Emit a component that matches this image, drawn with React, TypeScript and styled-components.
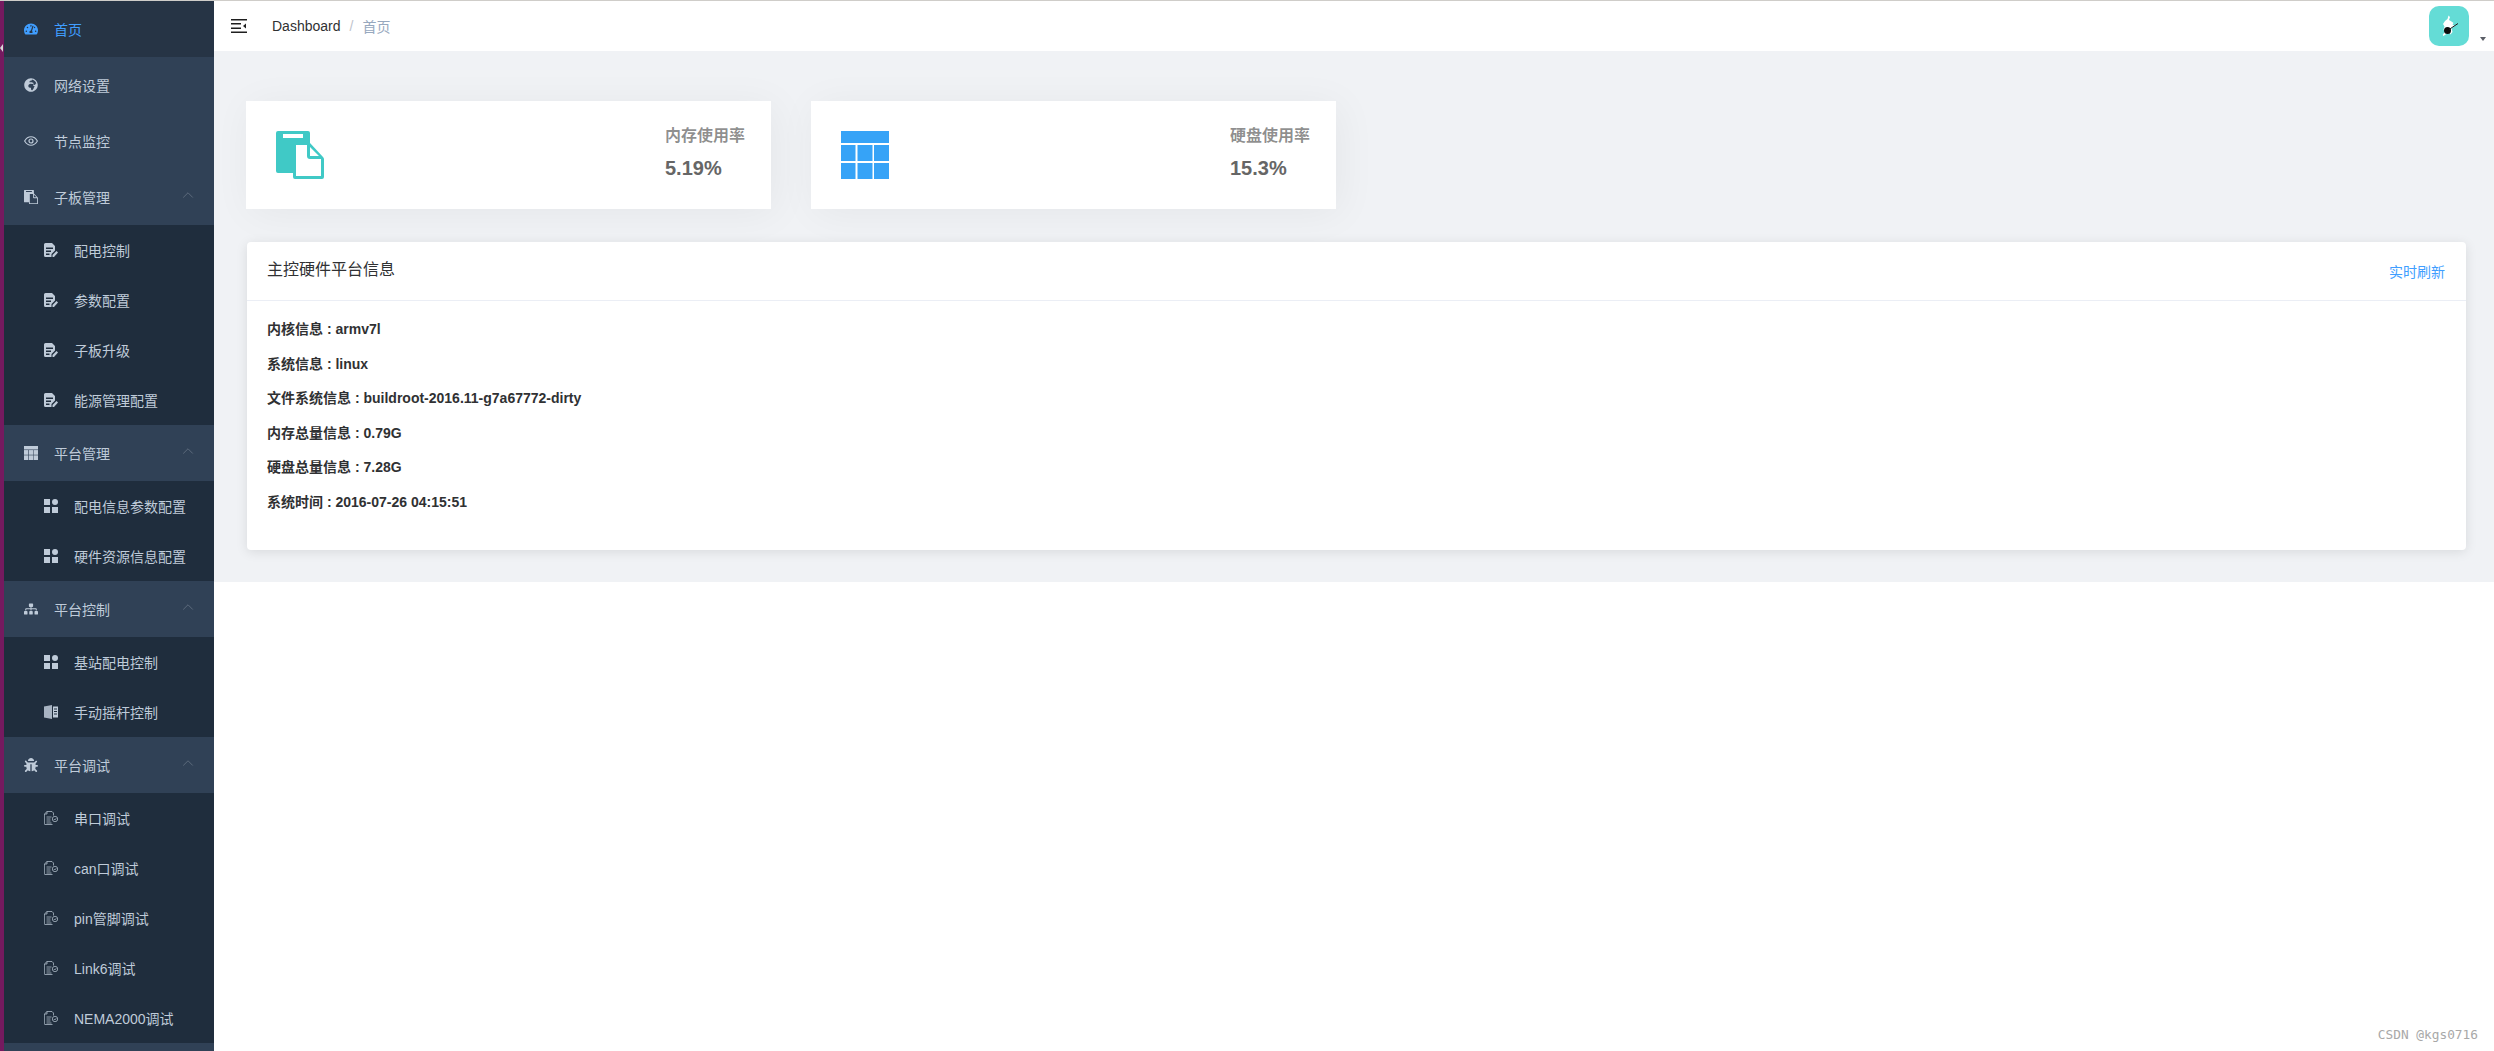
import React from 'react';
import styled, { createGlobalStyle } from 'styled-components';
import { ChevronUp } from 'lucide-react';
import { FaBug, FaGlobeAfrica, FaSitemap, FaTachometerAlt } from 'react-icons/fa';

const GlobalStyle = createGlobalStyle`
    html, body {
        margin: 0;
        padding: 0;
        background: #fff;
    }
    body {
        font-family: "Liberation Sans", "Noto Sans CJK SC", sans-serif;
        overflow: hidden;
    }
    * {
        box-sizing: border-box;
    }
`;

type IconProps = { size?: number };

const FilesIcon = ({ size = 14 }: IconProps) => (
    <svg width={size} height={size} viewBox="0 0 48 48" fill="currentColor">
        <path
            fillRule="evenodd"
            d="M2 0h30a2 2 0 0 1 2 2v10l13 14a3 3 0 0 1 1 2v18a2 2 0 0 1-2 2H19a2 2 0 0 1-2-2v-4H2a2 2 0 0 1-2-2V2a2 2 0 0 1 2-2zM7 3v4h20V3zM20 14v31h25V28H34a3 3 0 0 1-3-3V14zM34 16v9h9z"
        />
    </svg>
);

const TableIcon = ({ size = 14 }: IconProps) => (
    <svg width={size} height={size} viewBox="0 0 48 48" fill="currentColor">
        <rect x="0" y="0" width="48" height="12" />
        <rect x="0" y="14" width="14.500" height="16" />
        <rect x="16.500" y="14" width="15" height="16" />
        <rect x="33" y="14" width="15" height="16" />
        <rect x="0" y="32" width="14.500" height="16" />
        <rect x="16.500" y="32" width="15" height="16" />
        <rect x="33" y="32" width="15" height="16" />
    </svg>
);

const EyeIcon = ({ size = 14 }: IconProps) => (
    <svg width={size} height={size} viewBox="0 0 14 14" fill="none" stroke="currentColor">
        <path strokeWidth="1.100" d="M.6 7C2.200 4.300 4.400 2.800 7 2.800s4.800 1.500 6.400 4.200c-1.600 2.700-3.800 4.200-6.400 4.200S2.200 9.700.6 7z" />
        <circle cx="7" cy="7" r="2" strokeWidth="1.200" />
    </svg>
);

const DocEditIcon = ({ size = 14 }: IconProps) => (
    <svg width={size} height={size} viewBox="0 0 14 14" fill="currentColor">
        <path
            fillRule="evenodd"
            d="M1.500 0H8l3 3v4.500L7.500 11v3h-6A1.500 1.500 0 0 1 0 12.500V1.500A1.500 1.500 0 0 1 1.500 0zM2 4.500V6h7V4.500zM2 7.500V9h5V7.500zM2 10.500V12h3.500v-1.500z"
        />
        <path d="M8.500 14v-2l4-4 1.500 1.500-4 4.500z" />
    </svg>
);

const AppsIcon = ({ size = 14 }: IconProps) => (
    <svg width={size} height={size} viewBox="0 0 14 14" fill="currentColor">
        <rect x="0" y="0" width="6" height="6" />
        <circle cx="11" cy="3" r="3" />
        <rect x="0" y="8" width="6" height="6" />
        <rect x="8" y="8" width="6" height="6" />
    </svg>
);

const BookIcon = ({ size = 14 }: IconProps) => (
    <svg width={size} height={size} viewBox="0 0 14 14" fill="currentColor">
        <path d="M0 1.500 8 0v14L0 12.500z" opacity="0.85" />
        <path
            fillRule="evenodd"
            d="M9 1.500h5v11H9zM10 3.500v1h3v-1zM10 6v1h3V6zM10 8.500v1h3v-1z"
        />
    </svg>
);

const DocCheckIcon = ({ size = 14 }: IconProps) => (
    <svg width={size} height={size} viewBox="0 0 14 14" fill="none" stroke="currentColor" strokeWidth="0.7">
        <path d="M3 .5h5l1.500 1.500v2.500M8.500 13.500H1a.6.6 0 0 1-.6-.6V3L3 .5v2.500H.5" />
        <path d="M2.500 6h5M2.500 8h4M2.500 10h4M2.500 12h5" />
        <circle cx="11" cy="8" r="2.700" />
        <path d="M9.800 8l1 1 1.500-1.800" />
    </svg>
);

const HamburgerIcon = () => (
    <svg width="16" height="14" viewBox="0 0 16 14" fill="#1f1f1f">
        <rect x="0" y="0" width="16" height="1.500" />
        <rect x="0" y="4" width="10" height="1.500" />
        <rect x="0" y="8.500" width="10" height="1.500" />
        <rect x="0" y="12.500" width="16" height="1.500" />
        <path d="M12 7l3-2.500v5z" />
    </svg>
);

const BunnyIcon = () => (
    <svg width="40" height="40" viewBox="0 0 40 40">
        <path
            fill="#fff"
            d="M19.500 9.500l1.500 1.500-1 3 2.500 1.500 2 1.500-1 1.500 2 1.500-3 2 1 4-2 2.500-2-2.500-1.500 1.500-3.500 2.500-.8-1 2-3-1.200-2.500 1-3-1.500-2.500 2-3 2.500-2z"
        />
        <circle cx="18.500" cy="24.500" r="3.500" fill="#0c0c0c" />
        <path d="M20 23.500l9-6" stroke="#222" strokeWidth="1" />
    </svg>
);

type MenuItem = { label: string; icon: React.ReactNode };
type MenuSection = MenuItem & { active?: boolean; children?: MenuItem[] };

const menu: MenuSection[] = [
    { label: '首页', icon: <FaTachometerAlt size={14} />, active: true },
    { label: '网络设置', icon: <FaGlobeAfrica size={14} /> },
    { label: '节点监控', icon: <EyeIcon /> },
    {
        label: '子板管理',
        icon: <FilesIcon />,
        children: [
            { label: '配电控制', icon: <DocEditIcon /> },
            { label: '参数配置', icon: <DocEditIcon /> },
            { label: '子板升级', icon: <DocEditIcon /> },
            { label: '能源管理配置', icon: <DocEditIcon /> },
        ],
    },
    {
        label: '平台管理',
        icon: <TableIcon />,
        children: [
            { label: '配电信息参数配置', icon: <AppsIcon /> },
            { label: '硬件资源信息配置', icon: <AppsIcon /> },
        ],
    },
    {
        label: '平台控制',
        icon: <FaSitemap size={14} />,
        children: [
            { label: '基站配电控制', icon: <AppsIcon /> },
            { label: '手动摇杆控制', icon: <BookIcon /> },
        ],
    },
    {
        label: '平台调试',
        icon: <FaBug size={14} />,
        children: [
            { label: '串口调试', icon: <DocCheckIcon /> },
            { label: 'can口调试', icon: <DocCheckIcon /> },
            { label: 'pin管脚调试', icon: <DocCheckIcon /> },
            { label: 'Link6调试', icon: <DocCheckIcon /> },
            { label: 'NEMA2000调试', icon: <DocCheckIcon /> },
        ],
    },
];

const infoRows = [
    ['内核信息', 'armv7l'],
    ['系统信息', 'linux'],
    ['文件系统信息', 'buildroot-2016.11-g7a67772-dirty'],
    ['内存总量信息', '0.79G'],
    ['硬盘总量信息', '7.28G'],
];

const App = () => {
    return (
        <>
            <GlobalStyle />
            <Page>
                <Strip />
                <Sidebar>
                    {menu.map((section) => (
                        <div key={section.label}>
                            <SectionRow $active={section.active}>
                                <NavIcon>{section.icon}</NavIcon>
                                <span>{section.label}</span>
                                {section.children && (
                                    <Chevron>
                                        <ChevronUp size={18} strokeWidth={1.3} />
                                    </Chevron>
                                )}
                            </SectionRow>
                            {section.children?.map((item) => (
                                <SubRow key={item.label}>
                                    <NavIcon>{item.icon}</NavIcon>
                                    <span>{item.label}</span>
                                </SubRow>
                            ))}
                        </div>
                    ))}
                    <SectionRow />
                </Sidebar>
                <Main>
                    <Navbar>
                        <HamburgerIcon />
                        <Breadcrumb>
                            <span>Dashboard</span>
                            <Slash>/</Slash>
                            <Current>首页</Current>
                        </Breadcrumb>
                        <Avatar>
                            <BunnyIcon />
                            <Caret />
                        </Avatar>
                    </Navbar>
                    <Content>
                        <Panels>
                            <Panel>
                                <PanelIcon $color="#40c9c6">
                                    <FilesIcon size={48} />
                                </PanelIcon>
                                <PanelText>
                                    <PanelLabel>内存使用率</PanelLabel>
                                    <PanelValue>5.19%</PanelValue>
                                </PanelText>
                            </Panel>
                            <Panel>
                                <PanelIcon $color="#36a3f7">
                                    <TableIcon size={48} />
                                </PanelIcon>
                                <PanelText>
                                    <PanelLabel>硬盘使用率</PanelLabel>
                                    <PanelValue>15.3%</PanelValue>
                                </PanelText>
                            </Panel>
                        </Panels>
                        <InfoCard>
                            <InfoHeader>
                                <InfoTitle>主控硬件平台信息</InfoTitle>
                                <RefreshLink>实时刷新</RefreshLink>
                            </InfoHeader>
                            <InfoBody>
                                {infoRows.map(([name, value]) => (
                                    <InfoRow key={name}>
                                        {name}&nbsp;:&nbsp;{value}
                                    </InfoRow>
                                ))}
                                <InfoRow>系统时间 :&nbsp;2016-07-26 04:15:51</InfoRow>
                            </InfoBody>
                        </InfoCard>
                    </Content>
                </Main>
                <Watermark>CSDN @kgs0716</Watermark>
            </Page>
        </>
    );
};

export default App;

const Page = styled.div`
    display: flex;
    height: 1051px;
    border-top: 1px solid #cfcdc9;
    overflow: hidden;
`;

const Strip = styled.div`
    position: relative;
    flex: 0 0 4px;
    background: #751a5f;
    &::after {
        content: '';
        position: absolute;
        left: 0;
        top: 43px;
        border-top: 4px solid transparent;
        border-bottom: 4px solid transparent;
        border-right: 3px solid #d8d8d8;
    }
`;

const Sidebar = styled.nav`
    flex: 0 0 210px;
    background: #304156;
    color: #bfcbd9;
    font-size: 14px;
`;

const SectionRow = styled.div<{ $active?: boolean }>`
    display: flex;
    align-items: center;
    height: 56px;
    padding-left: 20px;
    gap: 16px;
    background: ${(p) => (p.$active ? '#263445' : '#304156')};
    color: ${(p) => (p.$active ? '#409eff' : '#bfcbd9')};
`;

const SubRow = styled.div`
    display: flex;
    align-items: center;
    height: 50px;
    padding-left: 40px;
    gap: 16px;
    background: #1f2d3d;
`;

const NavIcon = styled.span`
    display: flex;
    width: 14px;
    height: 14px;
`;

const Chevron = styled.span`
    display: flex;
    margin-left: auto;
    margin-right: 17px;
    margin-bottom: 5px;
    color: #5d6b7c;
`;

const Main = styled.main`
    flex: 1;
    min-width: 0;
`;

const Navbar = styled.header`
    display: flex;
    align-items: center;
    height: 50px;
    padding: 0 25px 0 17px;
    background: #fff;
`;

const Breadcrumb = styled.div`
    display: flex;
    align-items: center;
    margin-left: 25px;
    font-size: 14px;
    color: #303133;
`;

const Slash = styled.span`
    margin: 0 9px;
    color: #c0c4cc;
`;

const Current = styled.span`
    color: #97a8be;
`;

const Avatar = styled.div`
    position: relative;
    width: 40px;
    height: 40px;
    margin-left: auto;
    border-radius: 10px;
    background: #64dcd6;
`;

const Caret = styled.span`
    position: absolute;
    left: 51px;
    top: 31px;
    border-top: 4px solid #5a5e66;
    border-left: 3.5px solid transparent;
    border-right: 3.5px solid transparent;
`;

const Content = styled.section`
    padding: 50px 28px 32px 32px;
    background: #f0f2f5;
`;

const Panels = styled.div`
    display: flex;
    gap: 40px;
`;

const Panel = styled.div`
    display: flex;
    justify-content: space-between;
    width: 525px;
    height: 108px;
    background: #fff;
    box-shadow: 4px 4px 40px rgba(0, 0, 0, 0.05);
`;

const PanelIcon = styled.div<{ $color: string }>`
    display: flex;
    padding: 30px 0 0 30px;
    color: ${(p) => p.$color};
`;

const PanelText = styled.div`
    margin: 26px 26px 0 0;
    font-weight: bold;
`;

const PanelLabel = styled.div`
    margin-bottom: 12px;
    font-size: 16px;
    line-height: 18px;
    color: rgba(0, 0, 0, 0.45);
`;

const PanelValue = styled.div`
    font-size: 20px;
    line-height: 22px;
    color: #666;
`;

const InfoCard = styled.div`
    margin: 33px 0 0 1px;
    border-radius: 4px;
    background: #fff;
    color: #303133;
    box-shadow: 0 2px 12px 0 rgba(0, 0, 0, 0.1);
`;

const InfoHeader = styled.div`
    display: flex;
    justify-content: space-between;
    height: 59px;
    padding: 0 21px 0 20px;
    border-bottom: 1px solid #ebeef5;
`;

const InfoTitle = styled.div`
    font-size: 16px;
    line-height: 55px;
`;

const RefreshLink = styled.a`
    font-size: 14px;
    line-height: 60px;
    color: #409eff;
`;

const InfoBody = styled.div`
    padding: 11px 21px 30px 20px;
`;

const InfoRow = styled.div`
    font-size: 14px;
    font-weight: bold;
    line-height: 34.6px;
`;

const Watermark = styled.div`
    position: absolute;
    right: 16px;
    bottom: 9px;
    font-family: "DejaVu Sans Mono", monospace;
    font-size: 12.8px;
    color: #a8a8a8;
`;
